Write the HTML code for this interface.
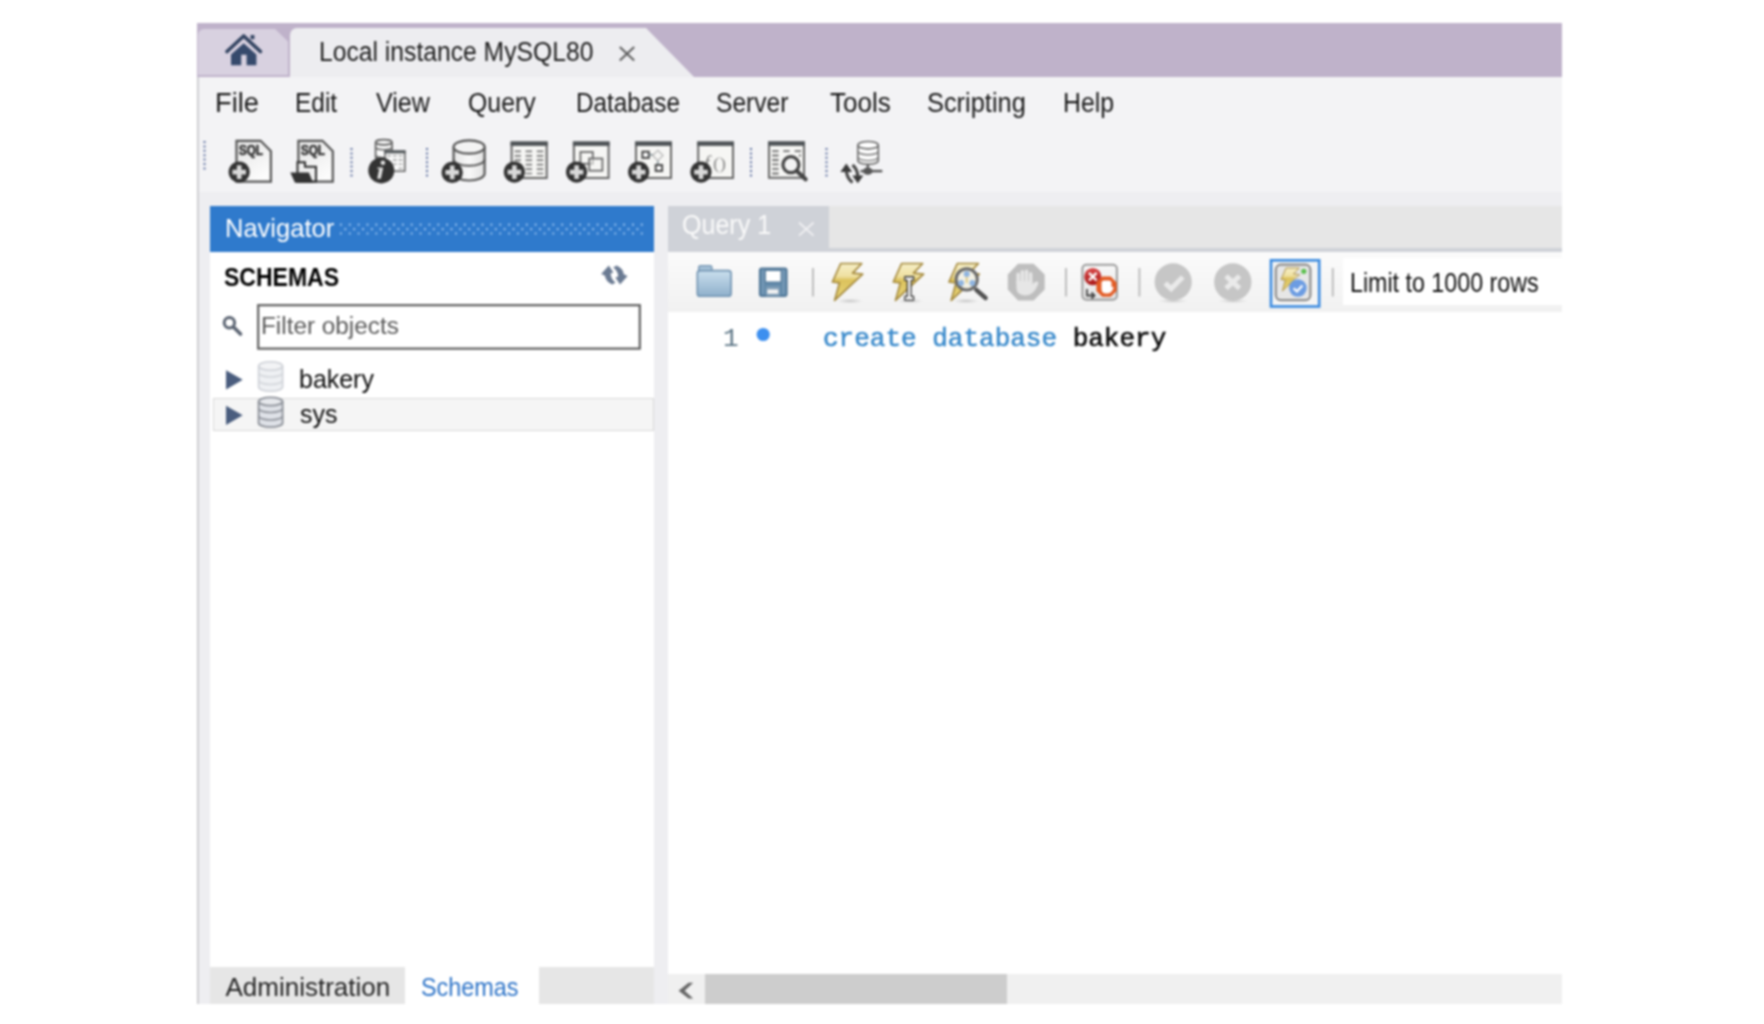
<!DOCTYPE html>
<html><head><meta charset="utf-8">
<style>
html,body{margin:0;padding:0;background:#fff;width:1764px;height:1024px;overflow:hidden;}
body{position:relative;font-family:"Liberation Sans",sans-serif;}
.a{position:absolute;}
.t{position:absolute;white-space:pre;line-height:1;transform-origin:0 0;}
</style></head><body><div class="a" style="left:0;top:0;width:1764px;height:1024px;filter:blur(0.9px)">
<!-- window -->
<div class="a" style="left:197px;top:23px;width:1365px;height:54px;background:#BFB2CA"></div>
<div class="a" style="left:197px;top:77px;width:1365px;height:115px;background:#F3F3F5"></div>
<div class="a" style="left:197px;top:192px;width:1365px;height:812px;background:#EEEEF1"></div>
<div class="a" style="left:197px;top:77px;width:2px;height:927px;background:linear-gradient(90deg,#C4C4C8,#D8D8DC)"></div>
<!-- home tab -->
<div class="a" style="left:198px;top:28.5px;width:90px;height:46.5px;background:#D8D1E0;border-top-left-radius:6px;clip-path:polygon(0 0,76.5px 0,90px 13px,90px 46.5px,0 46.5px)"></div>
<!-- active tab -->
<div class="a" style="left:290px;top:28px;width:404px;height:49px;background:#EDEDF0;border-top-left-radius:7px;clip-path:polygon(0 0,356px 0,404px 49px,0 49px)"></div>

<!-- navigator -->
<div class="a" style="left:210px;top:206px;width:444px;height:46px;background:#2F7ACC"></div>
<div class="a" style="left:210px;top:252px;width:444px;height:715px;background:#fff"></div>
<div class="a" style="left:210px;top:967px;width:195px;height:37px;background:#E6E6E6"></div>
<div class="a" style="left:405px;top:967px;width:134px;height:37px;background:#fff"></div>
<div class="a" style="left:539px;top:967px;width:115px;height:37px;background:#E6E6E6"></div>

<!-- query area -->
<div class="a" style="left:668px;top:206px;width:894px;height:42px;background:#E6E6E6"></div>
<div class="a" style="left:668px;top:248px;width:894px;height:4px;background:#CFD2D8"></div>
<div class="a" style="left:668px;top:206px;width:161px;height:46px;background:#CFD2D8"></div>
<div class="a" style="left:668px;top:252px;width:894px;height:60px;background:linear-gradient(#FBFBFB,#F1F1F1)"></div>
<div class="a" style="left:668px;top:312px;width:894px;height:662px;background:#fff"></div>
<div class="a" style="left:668px;top:974px;width:894px;height:30px;background:#F0F0F0"></div>
<div class="a" style="left:705px;top:974px;width:302px;height:30px;background:#CDCDCD"></div>


<div class="a" style="left:1343px;top:258px;width:219px;height:47px;background:#fff"></div>
<div class="a" style="left:213px;top:398px;width:439px;height:31px;background:#F5F5F5;border:1.5px solid #D8D8D8"></div>
<!-- texts -->
<div class="t" style="left:319px;top:38.5px;font-size:27px;color:#1C1C1C;transform:scaleX(0.914)">Local instance MySQL80</div>
<div class="t" style="left:214.5px;top:90px;font-size:27px;color:#181818;transform:scaleX(1.01)">File</div>
<div class="t" style="left:295px;top:90px;font-size:27px;color:#181818;transform:scaleX(0.905)">Edit</div>
<div class="t" style="left:376px;top:90px;font-size:27px;color:#181818;transform:scaleX(0.93)">View</div>
<div class="t" style="left:467.5px;top:90px;font-size:27px;color:#181818;transform:scaleX(0.92)">Query</div>
<div class="t" style="left:575.5px;top:90px;font-size:27px;color:#181818;transform:scaleX(0.9)">Database</div>
<div class="t" style="left:716px;top:90px;font-size:27px;color:#181818;transform:scaleX(0.91)">Server</div>
<div class="t" style="left:830px;top:90px;font-size:27px;color:#181818;transform:scaleX(0.965)">Tools</div>
<div class="t" style="left:927px;top:90px;font-size:27px;color:#181818;transform:scaleX(0.94)">Scripting</div>
<div class="t" style="left:1062.5px;top:90px;font-size:27px;color:#181818;transform:scaleX(0.92)">Help</div>
<div class="t" style="left:225px;top:216px;font-size:25px;color:#fff;transform:scaleX(1.02)">Navigator</div>
<div class="t" style="left:223.5px;top:265px;font-size:25px;font-weight:bold;color:#000;transform:scaleX(0.92)">SCHEMAS</div>
<div class="t" style="left:261px;top:315px;font-size:23px;color:#5A5A5A;transform:scaleX(1.057)">Filter objects</div>
<div class="t" style="left:299px;top:366px;font-size:26px;color:#0C0C0C;transform:scaleX(0.96)">bakery</div>
<div class="t" style="left:300px;top:401px;font-size:26px;color:#0C0C0C;transform:scaleX(0.96)">sys</div>
<div class="t" style="left:682px;top:212px;font-size:27px;color:#FAFAFA;transform:scaleX(0.928)">Query 1</div>
<div class="t" style="left:1350px;top:269px;font-size:28px;color:#0E0E0E;transform:scaleX(0.83)">Limit to 1000 rows</div>
<div class="t" style="left:225.5px;top:973.5px;font-size:26px;color:#262626;transform:scaleX(1.0)">Administration</div>
<div class="t" style="left:421px;top:974px;font-size:26px;color:#2E74C8;transform:scaleX(0.9)">Schemas</div>
<div class="t" style="left:723px;top:325.5px;font-size:26px;font-family:'Liberation Mono',monospace;color:#5C7585">1</div>
<div class="t" style="left:823px;top:326px;font-size:26px;font-family:'Liberation Mono',monospace;color:#3A8ACB;-webkit-text-stroke:0.55px #3A8ACB">create database <span style="color:#0A0A0A;-webkit-text-stroke:0.6px #0A0A0A">bakery</span></div>

<!-- icons -->
<svg class="a" style="left:0;top:0" width="1764" height="1024" viewBox="0 0 1764 1024">
<defs>
<linearGradient id="docg" x1="0" y1="0" x2="0.6" y2="1"><stop offset="0" stop-color="#E4E4E4"/><stop offset="1" stop-color="#FCFCFC"/></linearGradient>
<linearGradient id="cylg" x1="0" y1="0" x2="1" y2="0"><stop offset="0" stop-color="#E6E6E6"/><stop offset="0.5" stop-color="#F8F8F8"/><stop offset="1" stop-color="#E2E2E2"/></linearGradient>
<g id="plus"><circle r="10.6" fill="#323232"/><path d="M-6.8,-2.3h4.5v-4.5h4.6v4.5h4.5v4.6h-4.5v4.5h-4.6v-4.5h-4.5z" fill="#D9D9D9"/></g>
<g id="dots"><path d="M0,0v29" stroke="#5E70A0" stroke-width="2" stroke-dasharray="2 2.4"/></g>
</defs>
<!-- gripper & separators -->
<use href="#dots" x="204.5" y="141"/>
<use href="#dots" x="351.5" y="148"/>
<use href="#dots" x="427" y="148"/>
<use href="#dots" x="751" y="148"/>
<use href="#dots" x="826.5" y="148"/>

<!-- 1 new sql -->
<path d="M236.5,140.8H260.6L270.9,151.1V181.7H236.5Z" fill="url(#docg)" stroke="#565656" stroke-width="2.2"/>
<text x="239" y="154.6" font-family="Liberation Sans" font-weight="bold" font-size="14.5" fill="#3A3A3A" stroke="#3A3A3A" stroke-width="0.7" textLength="24" lengthAdjust="spacingAndGlyphs">SQL</text>
<use href="#plus" x="239.2" y="172.1"/>
<!-- 2 open sql -->
<path d="M298.4,140.8H322.5L332.8,151.1V181.7H298.4Z" fill="url(#docg)" stroke="#565656" stroke-width="2.2"/>
<text x="301" y="154.6" font-family="Liberation Sans" font-weight="bold" font-size="14.5" fill="#3A3A3A" stroke="#3A3A3A" stroke-width="0.7" textLength="24" lengthAdjust="spacingAndGlyphs">SQL</text>
<path d="M297.5,181.5V162.3H305V166.8H316V181.5Z" fill="#EEEEEE" stroke="#2E2E2E" stroke-width="2"/>
<path d="M290.3,172.6H308.9L313,182.8H295Z" fill="#333"/>
<!-- 3 inspector -->
<path d="M375.6,142.5V157A8.2,3 0 0 0 392,157V142.5" fill="#FAFAFA" stroke="#5E5E5E" stroke-width="1.7"/>
<ellipse cx="383.8" cy="142.3" rx="8.2" ry="2.6" fill="#F6F6F6" stroke="#5E5E5E" stroke-width="1.7"/>
<path d="M375.6,147A8.2,2.8 0 0 0 392,147M375.6,155A8.2,2.8 0 0 0 392,155" fill="none" stroke="#6A6A6A" stroke-width="1.5"/>
<rect x="385" y="151.2" width="19.8" height="20" fill="#FCFCFC" stroke="#666" stroke-width="1.6"/>
<rect x="384.2" y="150.4" width="21.4" height="3" fill="#555A5D"/>
<path d="M387,155.8h4M392.8,155.8h4M398.6,155.8h4M392.8,160h4M398.6,160h4M392.8,164.2h4M398.6,164.2h4M398.6,168.4h4" stroke="#9A9A9A" stroke-width="1.3"/>
<circle cx="381.3" cy="170.4" r="13" fill="#333"/>
<circle cx="382.9" cy="162.7" r="2.3" fill="#E2E2E2"/>
<path d="M377.6,167.4H383.2L380.8,178.8H377.2L379.2,169H377.4Z" fill="#E2E2E2"/>
<!-- 4 new schema -->
<path d="M453.6,147V173.5A15.5,7 0 0 0 484.6,173.5V147" fill="url(#cylg)" stroke="#565656" stroke-width="2.2"/>
<ellipse cx="469.1" cy="147" rx="15.5" ry="6.6" fill="#F3F3F3" stroke="#565656" stroke-width="2.2"/>
<path d="M453.6,159.2A15.5,6.6 0 0 0 484.6,159.2" fill="none" stroke="#565656" stroke-width="2"/>
<use href="#plus" x="452.2" y="172.4"/>
<!-- 5 new table -->
<rect x="511.6" y="142.5" width="35.1" height="35.5" fill="#F6F6F4" stroke="#666" stroke-width="2"/>
<rect x="510.6" y="141.5" width="37.1" height="4.4" fill="#4F5457"/>
<path d="M514.7,151.4h6.2M525.6,151.4h6.5M536.8,151.4h6.5M514.7,155.8h6.2M525.6,155.8h6.5M536.8,155.8h6.5M514.7,160.2h6.2M525.6,160.2h6.5M536.8,160.2h6.5M525.6,164.7h6.5M536.8,164.7h6.5M525.6,169.1h6.5M536.8,169.1h6.5M525.6,173.5h6.5M536.8,173.5h6.5" stroke="#777" stroke-width="1.7"/>
<use href="#plus" x="514.4" y="172.1"/>
<!-- 6 new view -->
<rect x="573.9" y="142.5" width="34.7" height="35.5" fill="#F6F6F4" stroke="#666" stroke-width="2"/>
<rect x="572.9" y="141.5" width="36.7" height="4.4" fill="#4F5457"/>
<rect x="580.4" y="152" width="12.4" height="11.8" fill="none" stroke="#6A6A6A" stroke-width="1.8"/>
<rect x="589.2" y="158.5" width="13.2" height="12.2" fill="rgba(246,246,244,0.6)" stroke="#6A6A6A" stroke-width="1.8"/>
<use href="#plus" x="576.6" y="172.1"/>
<!-- 7 new routine -->
<rect x="636" y="142.5" width="35" height="35.5" fill="#F6F6F4" stroke="#666" stroke-width="2"/>
<rect x="635" y="141.5" width="37" height="4.4" fill="#4F5457"/>
<rect x="642.4" y="151.7" width="6.4" height="6.2" fill="#fff" stroke="#4A4A4A" stroke-width="2"/>
<path d="M649,154.8H652.8M657.8,160.5V164" stroke="#708088" stroke-width="1.4"/>
<path d="M657.8,150.3L663,155.5L657.8,160.7L652.6,155.5Z" fill="none" stroke="#B8B8B8" stroke-width="1.3"/>
<rect x="655.7" y="165" width="6.4" height="6" fill="#fff" stroke="#4A4A4A" stroke-width="2"/>
<use href="#plus" x="638.7" y="172.1"/>
<!-- 8 new function -->
<rect x="698.2" y="142.5" width="34.8" height="35.5" fill="#F6F6F4" stroke="#666" stroke-width="2"/>
<rect x="697.2" y="141.5" width="36.8" height="4.4" fill="#4F5457"/>
<text x="704.5" y="168.5" font-family="Liberation Serif" font-style="italic" font-size="18" fill="#777">f</text>
<text x="713" y="168.5" font-family="Liberation Serif" font-size="17" fill="#8A8A8A" textLength="13" lengthAdjust="spacingAndGlyphs">()</text>
<use href="#plus" x="701" y="172.1"/>
<!-- 9 search data -->
<rect x="769" y="142.4" width="35" height="35.4" fill="#F6F6F4" stroke="#666" stroke-width="2"/>
<rect x="768" y="141.4" width="37" height="4.4" fill="#4F5457"/>
<path d="M772.2,151.1h6.4M783.3,151.1h6.3M794.7,151.1h6.4M772.2,155.5h6.4M772.2,160h6.4M772.2,164.4h6.4M772.2,168.9h6.4M772.2,173.5h6.4M799,155.5h2" stroke="#6E6E6E" stroke-width="1.8"/>
<circle cx="790.9" cy="164.7" r="8" fill="#F3F3F3" stroke="#444" stroke-width="3.2"/>
<path d="M796.8,171L805.6,179.2" stroke="#444" stroke-width="4.2" stroke-linecap="round"/>
<!-- 10 reconnect -->
<path d="M857.9,145.2V160.6A10.2,3.8 0 0 0 878.3,160.6V145.2" fill="#FDFDFD" stroke="#666" stroke-width="1.6"/>
<ellipse cx="868.1" cy="145.2" rx="10.2" ry="3.7" fill="#FFFFFF" stroke="#666" stroke-width="1.6"/>
<path d="M857.9,151.2A10.2,3.6 0 0 0 878.3,151.2M857.9,157A10.2,3.6 0 0 0 878.3,157" fill="none" stroke="#777" stroke-width="1.4"/>
<path d="M867.8,164.5V168" stroke="#555" stroke-width="2.2"/>
<path d="M860.5,171.1H882.3" stroke="#555" stroke-width="2.4"/>
<ellipse cx="867.8" cy="171.1" rx="4.8" ry="3.6" fill="#555"/>
<path d="M840.4,172L846.3,163.6L852.2,172Z" fill="#383838"/>
<path d="M846.3,170Q846.5,178 852.5,182.5" fill="none" stroke="#444" stroke-width="3"/>
<path d="M852.2,175.4H863.4L857.8,183.2Z" fill="#383838"/>
<path d="M852.5,165Q857.5,169 857.8,176.5" fill="none" stroke="#444" stroke-width="3"/>
</svg>

<svg class="a" style="left:0;top:0" width="1764" height="1024" viewBox="0 0 1764 1024">
<defs>
<linearGradient id="foldg" x1="0" y1="0" x2="0" y2="1"><stop offset="0" stop-color="#CADFEE"/><stop offset="1" stop-color="#8FB0CB"/></linearGradient>
<linearGradient id="boltg" x1="0" y1="0" x2="0" y2="1"><stop offset="0" stop-color="#F6EFC8"/><stop offset="0.35" stop-color="#EFE0A0"/><stop offset="0.45" stop-color="#DCC25C"/><stop offset="1" stop-color="#E8D57C"/></linearGradient>
<radialGradient id="shadg" cx="0.5" cy="0.5" r="0.5"><stop offset="0" stop-color="#000" stop-opacity="0.18"/><stop offset="1" stop-color="#000" stop-opacity="0"/></radialGradient>
<linearGradient id="redg" x1="0" y1="0" x2="0" y2="1"><stop offset="0" stop-color="#D84848"/><stop offset="1" stop-color="#A81818"/></linearGradient>
<linearGradient id="btng" x1="0" y1="0" x2="0" y2="1"><stop offset="0" stop-color="#F8F8F8"/><stop offset="1" stop-color="#E4E4E4"/></linearGradient>
</defs>
<!-- folder -->
<path d="M698.7,271V267.5Q698.7,265.7 700.5,265.7H710Q711.9,265.7 711.9,267.5V271Z" fill="#A9C4DA" stroke="#7595B2" stroke-width="1.4"/>
<rect x="697.3" y="270.6" width="33.8" height="25.6" rx="2.8" fill="url(#foldg)" stroke="#7193B1" stroke-width="1.6"/>
<!-- save -->
<rect x="759.6" y="268.3" width="27.3" height="28" rx="2.2" fill="#628AAA" stroke="#4D7292" stroke-width="1.4"/>
<path d="M763,270V294M783.5,270V294" stroke="#86A6C0" stroke-width="1.2"/>
<rect x="765.3" y="270.4" width="15.8" height="11.6" fill="#FFFFFF" stroke="#4D7292" stroke-width="1"/>
<rect x="766.2" y="286.2" width="13.6" height="10" fill="#7F9DB6"/>
<rect x="767.3" y="289.4" width="11" height="4.4" fill="#F2F2F2"/>
<!-- separators -->
<path d="M813,268V296.5M1066,268V296.5M1139.4,268V296.5M1332.8,268V296.5" stroke="#BDBDBD" stroke-width="2"/>
<!-- bolt 1 -->
<ellipse cx="850" cy="301" rx="13" ry="2.5" fill="url(#shadg)"/>
<polygon points="840.7,263.5 861.8,263.5 852.6,273.2 862.7,274.1 834.6,300.4 839.4,282.9 832.4,282.0" fill="url(#boltg)" stroke="#A58A3E" stroke-width="1.7" stroke-linejoin="round"/>
<!-- bolt 2 -->
<ellipse cx="910" cy="301" rx="13" ry="2.5" fill="url(#shadg)"/>
<polygon points="901.6,263.5 922.7,263.5 913.5,273.2 923.6,274.1 895.5,300.4 900.3,282.9 893.3,282.0" fill="url(#boltg)" stroke="#A58A3E" stroke-width="1.7" stroke-linejoin="round"/>
<path d="M904.2,278.6H914.2M904.2,298.2H914.2M909.2,279V298" stroke="#333" stroke-width="5"/>
<path d="M905.4,278.6H913M905.4,298.2H913M909.2,279.5V297.5" stroke="#FFFFFF" stroke-width="2.4"/>
<!-- explain -->
<ellipse cx="966" cy="301" rx="13" ry="2.5" fill="url(#shadg)"/>
<polygon points="957.3,263.5 978.4,263.5 969.2,273.2 979.3,274.1 951.2,300.4 956.0,282.9 949.0,282.0" fill="url(#boltg)" stroke="#A58A3E" stroke-width="1.7" stroke-linejoin="round"/>
<path d="M976.3,289.8L985.6,298" stroke="#505050" stroke-width="4.4" stroke-linecap="round"/>
<circle cx="966.7" cy="279.4" r="10.6" fill="#F2F0E4" stroke="#6A6A6A" stroke-width="3"/>
<circle cx="966.7" cy="274" r="3" fill="#8FB4E0"/>
<circle cx="961" cy="283" r="3" fill="#8FB4E0"/>
<circle cx="972.4" cy="283" r="3" fill="#8FB4E0"/>
<path d="M966.7,277V283" stroke="#D8C070" stroke-width="1.5"/>
<!-- stop -->
<polygon points="1018,263.8 1033.6,263.8 1044.7,274.6 1044.7,289.4 1033.6,300.4 1018,300.4 1007.8,289.4 1007.8,274.6" fill="#BEBEBE"/>
<g fill="#E6E6E6"><rect x="1016.4" y="272.5" width="3.4" height="12" rx="1.7"/><rect x="1020.6" y="270" width="3.4" height="14" rx="1.7"/><rect x="1024.8" y="269.6" width="3.4" height="14" rx="1.7"/><rect x="1029" y="272" width="3.4" height="12" rx="1.7"/><path d="M1016.4,281H1032.4V284.5Q1035,280.8 1037.4,281.6Q1039.2,282.6 1037.6,285.4Q1033.6,295.4 1024.8,295.4Q1016.4,295.4 1016.4,287Z"/></g>
<!-- toggle stop on error -->
<rect x="1082.4" y="264.8" width="34.5" height="35" rx="4" fill="url(#btng)" stroke="#9C9C9C" stroke-width="2"/>
<path d="M1087,289V295.5H1094M1091.5,292.5L1094.5,295.5L1091.5,298.5" fill="none" stroke="#444" stroke-width="1.8"/>
<circle cx="1092.8" cy="276.7" r="8.6" fill="url(#redg)"/>
<path d="M1089,272.9L1096.6,280.5M1096.6,272.9L1089,280.5" stroke="#FFF" stroke-width="2.4"/>
<polygon points="1102.3,276.6 1110.7,276.6 1116.6,282.5 1116.6,290.9 1110.7,296.8 1102.3,296.8 1096.4,290.9 1096.4,282.5" fill="#E35B24"/>
<path d="M1101.5,283Q1101.5,280.5 1104,280.5H1109Q1111.5,280.5 1111.5,283V287Q1113.5,286 1113.5,288Q1112,293.5 1106.5,293.5Q1101.5,293.5 1101.5,289Z" fill="#FFF"/>
<!-- commit -->
<ellipse cx="1173" cy="301" rx="15" ry="2" fill="url(#shadg)"/>
<circle cx="1173.2" cy="281.9" r="18.6" fill="#C6C6C6"/>
<path d="M1165.2,283.2L1171.2,288.8L1182.8,277" fill="none" stroke="#EAEAEA" stroke-width="5"/>
<!-- rollback -->
<ellipse cx="1233" cy="301" rx="15" ry="2" fill="url(#shadg)"/>
<circle cx="1232.8" cy="282" r="18.7" fill="#C6C6C6"/>
<path d="M1226,276L1239.6,288.4M1239.6,276L1226,288.4" stroke="#EAEAEA" stroke-width="5"/>
<!-- autocommit -->
<rect x="1271" y="260.3" width="48.2" height="46.2" fill="#F4F4F4" stroke="#3A8AE0" stroke-width="2.6"/>
<rect x="1275.8" y="264.7" width="34.6" height="35.4" rx="5" fill="#E6E6E6" stroke="#8E8E8E" stroke-width="2.2"/>
<polygon points="1286.1,268.0 1299.2,268.0 1293.5,274.0 1299.8,274.6 1282.4,290.9 1285.3,280.0 1281.0,279.5" fill="url(#boltg)" stroke="#B09448" stroke-width="1"/>
<circle cx="1303.8" cy="271.3" r="2.6" fill="#5CC04E"/>
<path d="M1299,274.5L1293.5,280" stroke="#C8C8C8" stroke-width="1"/>
<circle cx="1297.9" cy="288" r="8.8" fill="#6C9CE2"/>
<path d="M1293.6,288.4L1297,291.4L1302.4,285.4" fill="none" stroke="#FFF" stroke-width="2.2"/>
</svg>

<svg class="a" style="left:0;top:0" width="1764" height="1024" viewBox="0 0 1764 1024">
<!-- home -->
<path d="M227,51.5L243.7,36L260.4,51.5" fill="none" stroke="#334461" stroke-width="3.6" stroke-linecap="round" stroke-linejoin="round"/>
<rect x="250.6" y="35" width="3.8" height="4.2" fill="#334461"/>
<path d="M231,54.5L243.7,43.2L256.4,54.5V65.3H246.6V54.8H241.2V65.3H231Z" fill="#364A6C"/>
<!-- tab close -->
<path d="M619.8,47L634.2,60.6M634.2,47L619.8,60.6" stroke="#5C5C5C" stroke-width="2"/>
<!-- query tab close -->
<path d="M799,222.5L813.6,235.6M813.6,222.5L799,235.6" stroke="#F0F0F2" stroke-width="1.8"/>
<!-- navigator dots -->
<path d="M339.9,224.7h2M348.8,224.7h2M357.6,224.7h2M366.5,224.7h2M375.3,224.7h2M384.2,224.7h2M393.0,224.7h2M401.9,224.7h2M410.7,224.7h2M419.6,224.7h2M428.4,224.7h2M437.3,224.7h2M446.1,224.7h2M455.0,224.7h2M463.8,224.7h2M472.7,224.7h2M481.5,224.7h2M490.4,224.7h2M499.2,224.7h2M508.1,224.7h2M516.9,224.7h2M525.8,224.7h2M534.6,224.7h2M543.5,224.7h2M552.3,224.7h2M561.2,224.7h2M570.0,224.7h2M578.9,224.7h2M587.7,224.7h2M596.6,224.7h2M605.4,224.7h2M614.3,224.7h2M623.1,224.7h2M632.0,224.7h2M640.8,224.7h2M344.3,229.1h2M353.2,229.1h2M362.0,229.1h2M370.9,229.1h2M379.7,229.1h2M388.6,229.1h2M397.4,229.1h2M406.3,229.1h2M415.1,229.1h2M424.0,229.1h2M432.8,229.1h2M441.7,229.1h2M450.5,229.1h2M459.4,229.1h2M468.2,229.1h2M477.1,229.1h2M485.9,229.1h2M494.8,229.1h2M503.6,229.1h2M512.5,229.1h2M521.3,229.1h2M530.2,229.1h2M539.0,229.1h2M547.9,229.1h2M556.7,229.1h2M565.6,229.1h2M574.4,229.1h2M583.3,229.1h2M592.1,229.1h2M601.0,229.1h2M609.8,229.1h2M618.7,229.1h2M627.5,229.1h2M636.4,229.1h2M339.9,233.5h2M348.8,233.5h2M357.6,233.5h2M366.5,233.5h2M375.3,233.5h2M384.2,233.5h2M393.0,233.5h2M401.9,233.5h2M410.7,233.5h2M419.6,233.5h2M428.4,233.5h2M437.3,233.5h2M446.1,233.5h2M455.0,233.5h2M463.8,233.5h2M472.7,233.5h2M481.5,233.5h2M490.4,233.5h2M499.2,233.5h2M508.1,233.5h2M516.9,233.5h2M525.8,233.5h2M534.6,233.5h2M543.5,233.5h2M552.3,233.5h2M561.2,233.5h2M570.0,233.5h2M578.9,233.5h2M587.7,233.5h2M596.6,233.5h2M605.4,233.5h2M614.3,233.5h2M623.1,233.5h2M632.0,233.5h2M640.8,233.5h2" stroke="#8DBAEC" stroke-width="2.2"/>
<!-- refresh -->
<path d="M601.2,274L608.8,265.6L613.4,272.4L610.6,273.6Q611,279.5 615.6,282.6L612.2,284.4Q605.4,281.4 605,275.8Z" fill="#6B7B93"/>
<path d="M601.2,274L608.8,265.6L613.4,272.4L610.6,273.6Q611,279.5 615.6,282.6L612.2,284.4Q605.4,281.4 605,275.8Z" fill="#6B7B93" transform="rotate(180 614.4 275)"/>
<!-- search -->
<circle cx="229.4" cy="322.8" r="5.2" fill="none" stroke="#5B6472" stroke-width="3"/>
<path d="M233.5,327L240.5,334" stroke="#5B6472" stroke-width="3.6" stroke-linecap="round"/>
<!-- filter box -->
<rect x="258.2" y="305.2" width="381.6" height="43.4" fill="none" stroke="#5E5E5E" stroke-width="2.2"/>
<!-- tree arrows -->
<path d="M226,370.2V389.4L242.7,379.8Z" fill="#4A5D7E"/>
<path d="M226,405.8V424.9L242.7,415.2Z" fill="#4A5D7E"/>
<!-- db bakery -->
<path d="M258.6,366V387A12,4.2 0 0 0 282.6,387V366" fill="#EEF0F3" stroke="#CDD0D6" stroke-width="1.6"/>
<ellipse cx="270.6" cy="366" rx="12" ry="4.2" fill="#F2F3F5" stroke="#CDD0D6" stroke-width="1.6"/>
<path d="M258.6,373A12,4 0 0 0 282.6,373M258.6,380.5A12,4 0 0 0 282.6,380.5" fill="none" stroke="#D2D5DA" stroke-width="1.5"/>
<!-- db sys -->
<path d="M258.6,401.5V423A12,4.2 0 0 0 282.6,423V401.5" fill="#DEE1E7" stroke="#8C9098" stroke-width="1.8"/>
<ellipse cx="270.6" cy="401.5" rx="12" ry="4.2" fill="#E6E8EC" stroke="#8C9098" stroke-width="1.8"/>
<path d="M258.6,408.5A12,4 0 0 0 282.6,408.5M258.6,416A12,4 0 0 0 282.6,416" fill="none" stroke="#8C9098" stroke-width="1.6"/>
<!-- editor dot -->
<circle cx="763.2" cy="334.5" r="6.6" fill="#3D8FEF"/>
<!-- scroll arrow -->
<path d="M678.6,990.7L688.6,982.8H693.2L684.6,990.7L693.2,998.4H688.6Z" fill="#666"/>
</svg>
</div></body></html>
